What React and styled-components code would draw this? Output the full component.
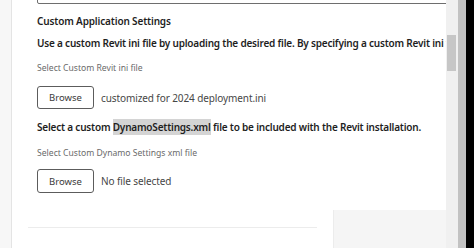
import React from 'react';
import styled, { createGlobalStyle } from 'styled-components';

const GlobalStyle = createGlobalStyle`
  html, body {
    margin: 0;
    padding: 0;
    width: 474px;
    height: 248px;
    overflow: hidden;
    background: #f7f7f7;
  }
  * { box-sizing: border-box; }
`;

const Screen = styled.div`
  display: flex;
  width: 474px;
  height: 248px;
  font-family: "Noto Sans", "Open Sans", sans-serif;
  color: #222;
`;

const Gutter = styled.div`
  width: 12px;
  background: #f7f7f7;
  border-right: 1px solid #e4e4e4;
`;

const Panel = styled.div`
  flex: 1;
  display: flex;
  flex-direction: column;
  background: #fff;
  overflow: hidden;
`;

const Content = styled.div`
  flex: 1;
  display: flex;
  flex-direction: column;
  padding-left: 25px;
  overflow: hidden;
`;

const TopBox = styled.div`
  height: 22px;
  margin-top: -18px;
  margin-right: -40px;
  border: 1px solid #6e6e6e;
  border-radius: 2px;
`;

const Title = styled.div`
  margin-top: ${({ $gap }) => $gap}px;
  font-size: 10px;
  font-weight: 600;
  line-height: 16px;
  white-space: nowrap;
  color: #1e1e1e;
  letter-spacing: ${({ $tight }) => ($tight ? '-0.2px' : '-0.15px')};
`;

const Mark = styled.span`
  background: #d4d4d4;
  padding: 1px 0;
`;

const FieldLabel = styled.div`
  margin-top: ${({ $gap }) => $gap}px;
  font-size: 8.6px;
  line-height: 14px;
  color: #6a6a6a;
`;

const FileRow = styled.div`
  margin-top: ${({ $gap }) => $gap}px;
  display: flex;
  align-items: center;
  gap: 7px;
`;

const Browse = styled.button`
  width: 57px;
  height: ${({ $h }) => $h}px;
  padding: 0;
  border: 1px solid #5c5c5c;
  border-radius: 3px;
  background: #fff;
  font-family: inherit;
  font-size: 9.5px;
  color: #3a3a3a;
`;

const FileName = styled.span`
  font-size: 10px;
  letter-spacing: -0.1px;
  color: #464646;
`;

const Footer = styled.div`
  height: 38px;
  display: flex;
`;

const FooterMain = styled.div`
  width: 321px;
  padding: 17px 16px 0 16px;
  background: #fff;
`;

const Rule = styled.div`
  height: 1px;
  background: #ececec;
`;

const FooterSide = styled.div`
  flex: 1;
  background: #f5f5f5;
  border-left: 1px solid #ececec;
`;

const Track = styled.div`
  width: 12px;
  background: #f0f0f0;
  padding: 35px 2px 0 1px;
`;

const Thumb = styled.div`
  height: 36px;
  background: #c6c6c6;
`;

const Band = styled.div`
  width: 8px;
  background: #c2c2c2;
`;

const Edge = styled.div`
  width: 8px;
  background: #000;
`;

export default function App() {
  return (
    <>
      <GlobalStyle />
      <Screen>
        <Gutter />
        <Panel>
          <Content>
            <TopBox />
            <Title $gap={9}>Custom Application Settings</Title>
            <Title $gap={6} $tight>
              Use a custom Revit ini file by uploading the desired file. By specifying a custom Revit ini file, the settings will be applied.
            </Title>
            <FieldLabel $gap={10}>Select Custom Revit ini file</FieldLabel>
            <FileRow $gap={11}>
              <Browse $h={23}>Browse</Browse>
              <FileName>customized for 2024 deployment.ini</FileName>
            </FileRow>
            <Title $gap={10} $tight>
              Select a custom <Mark>DynamoSettings.xml</Mark> file to be included with the Revit installation.
            </Title>
            <FieldLabel $gap={11}>Select Custom Dynamo Settings xml file</FieldLabel>
            <FileRow $gap={9}>
              <Browse $h={24}>Browse</Browse>
              <FileName>No file selected</FileName>
            </FileRow>
          </Content>
          <Footer>
            <FooterMain>
              <Rule />
            </FooterMain>
            <FooterSide />
          </Footer>
        </Panel>
        <Track>
          <Thumb />
        </Track>
        <Band />
        <Edge />
      </Screen>
    </>
  );
}
